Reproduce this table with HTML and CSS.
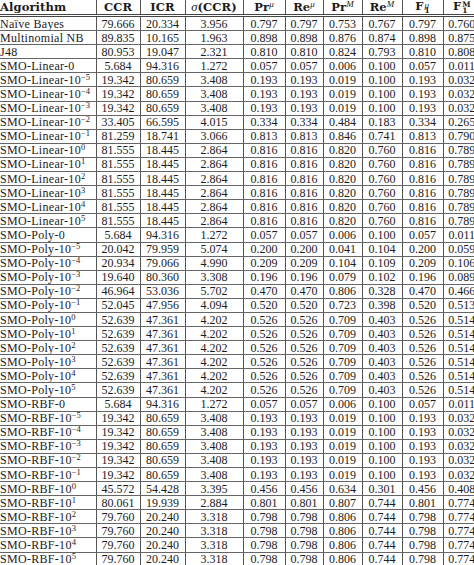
FILE: index.html
```html
<!DOCTYPE html>
<html>
<head>
<meta charset="utf-8">
<link rel="stylesheet" href="styles.css">
</head>
<body>
<table class="results">
<colgroup>
<col class="c-alg"><col class="c-ccr"><col class="c-icr"><col class="c-sd"><col class="c-m1"><col class="c-m2"><col class="c-m3"><col class="c-m4"><col class="c-m5"><col class="c-m6">
</colgroup>
<thead>
<tr>
<th class="alg">Algorithm</th>
<th>CCR</th>
<th>ICR</th>
<th><span class="mi">σ</span>(CCR)</th>
<th>Pr<sup class="mi">μ</sup></th>
<th>Re<sup class="mi">μ</sup></th>
<th>Pr<sup class="mi">M</sup></th>
<th>Re<sup class="mi">M</sup></th>
<th>F<span class="ss"><span class="up mi">μ</span><span class="dn">1</span></span></th>
<th>F<span class="ss"><span class="up">M</span><span class="dn">1</span></span></th>
</tr>
</thead>
<tbody>
<tr><td class="alg">Naïve Bayes</td><td>79.666</td><td>20.334</td><td>3.956</td><td>0.797</td><td>0.797</td><td>0.753</td><td>0.767</td><td>0.797</td><td>0.760</td></tr>
<tr><td class="alg">Multinomial NB</td><td>89.835</td><td>10.165</td><td>1.963</td><td>0.898</td><td>0.898</td><td>0.876</td><td>0.874</td><td>0.898</td><td>0.875</td></tr>
<tr><td class="alg">J48</td><td>80.953</td><td>19.047</td><td>2.321</td><td>0.810</td><td>0.810</td><td>0.824</td><td>0.793</td><td>0.810</td><td>0.808</td></tr>
<tr><td class="alg">SMO-Linear-0</td><td>5.684</td><td>94.316</td><td>1.272</td><td>0.057</td><td>0.057</td><td>0.006</td><td>0.100</td><td>0.057</td><td>0.011</td></tr>
<tr><td class="alg">SMO-Linear-10<sup>−5</sup></td><td>19.342</td><td>80.659</td><td>3.408</td><td>0.193</td><td>0.193</td><td>0.019</td><td>0.100</td><td>0.193</td><td>0.032</td></tr>
<tr><td class="alg">SMO-Linear-10<sup>−4</sup></td><td>19.342</td><td>80.659</td><td>3.408</td><td>0.193</td><td>0.193</td><td>0.019</td><td>0.100</td><td>0.193</td><td>0.032</td></tr>
<tr><td class="alg">SMO-Linear-10<sup>−3</sup></td><td>19.342</td><td>80.659</td><td>3.408</td><td>0.193</td><td>0.193</td><td>0.019</td><td>0.100</td><td>0.193</td><td>0.032</td></tr>
<tr><td class="alg">SMO-Linear-10<sup>−2</sup></td><td>33.405</td><td>66.595</td><td>4.015</td><td>0.334</td><td>0.334</td><td>0.484</td><td>0.183</td><td>0.334</td><td>0.265</td></tr>
<tr><td class="alg">SMO-Linear-10<sup>−1</sup></td><td>81.259</td><td>18.741</td><td>3.066</td><td>0.813</td><td>0.813</td><td>0.846</td><td>0.741</td><td>0.813</td><td>0.790</td></tr>
<tr><td class="alg">SMO-Linear-10<sup>0</sup></td><td>81.555</td><td>18.445</td><td>2.864</td><td>0.816</td><td>0.816</td><td>0.820</td><td>0.760</td><td>0.816</td><td>0.789</td></tr>
<tr><td class="alg">SMO-Linear-10<sup>1</sup></td><td>81.555</td><td>18.445</td><td>2.864</td><td>0.816</td><td>0.816</td><td>0.820</td><td>0.760</td><td>0.816</td><td>0.789</td></tr>
<tr><td class="alg">SMO-Linear-10<sup>2</sup></td><td>81.555</td><td>18.445</td><td>2.864</td><td>0.816</td><td>0.816</td><td>0.820</td><td>0.760</td><td>0.816</td><td>0.789</td></tr>
<tr><td class="alg">SMO-Linear-10<sup>3</sup></td><td>81.555</td><td>18.445</td><td>2.864</td><td>0.816</td><td>0.816</td><td>0.820</td><td>0.760</td><td>0.816</td><td>0.789</td></tr>
<tr><td class="alg">SMO-Linear-10<sup>4</sup></td><td>81.555</td><td>18.445</td><td>2.864</td><td>0.816</td><td>0.816</td><td>0.820</td><td>0.760</td><td>0.816</td><td>0.789</td></tr>
<tr><td class="alg">SMO-Linear-10<sup>5</sup></td><td>81.555</td><td>18.445</td><td>2.864</td><td>0.816</td><td>0.816</td><td>0.820</td><td>0.760</td><td>0.816</td><td>0.789</td></tr>
<tr><td class="alg">SMO-Poly-0</td><td>5.684</td><td>94.316</td><td>1.272</td><td>0.057</td><td>0.057</td><td>0.006</td><td>0.100</td><td>0.057</td><td>0.011</td></tr>
<tr><td class="alg">SMO-Poly-10<sup>−5</sup></td><td>20.042</td><td>79.959</td><td>5.074</td><td>0.200</td><td>0.200</td><td>0.041</td><td>0.104</td><td>0.200</td><td>0.059</td></tr>
<tr><td class="alg">SMO-Poly-10<sup>−4</sup></td><td>20.934</td><td>79.066</td><td>4.990</td><td>0.209</td><td>0.209</td><td>0.104</td><td>0.109</td><td>0.209</td><td>0.106</td></tr>
<tr><td class="alg">SMO-Poly-10<sup>−3</sup></td><td>19.640</td><td>80.360</td><td>3.308</td><td>0.196</td><td>0.196</td><td>0.079</td><td>0.102</td><td>0.196</td><td>0.089</td></tr>
<tr><td class="alg">SMO-Poly-10<sup>−2</sup></td><td>46.964</td><td>53.036</td><td>5.702</td><td>0.470</td><td>0.470</td><td>0.806</td><td>0.328</td><td>0.470</td><td>0.466</td></tr>
<tr><td class="alg">SMO-Poly-10<sup>−1</sup></td><td>52.045</td><td>47.956</td><td>4.094</td><td>0.520</td><td>0.520</td><td>0.723</td><td>0.398</td><td>0.520</td><td>0.513</td></tr>
<tr><td class="alg">SMO-Poly-10<sup>0</sup></td><td>52.639</td><td>47.361</td><td>4.202</td><td>0.526</td><td>0.526</td><td>0.709</td><td>0.403</td><td>0.526</td><td>0.514</td></tr>
<tr><td class="alg">SMO-Poly-10<sup>1</sup></td><td>52.639</td><td>47.361</td><td>4.202</td><td>0.526</td><td>0.526</td><td>0.709</td><td>0.403</td><td>0.526</td><td>0.514</td></tr>
<tr><td class="alg">SMO-Poly-10<sup>2</sup></td><td>52.639</td><td>47.361</td><td>4.202</td><td>0.526</td><td>0.526</td><td>0.709</td><td>0.403</td><td>0.526</td><td>0.514</td></tr>
<tr><td class="alg">SMO-Poly-10<sup>3</sup></td><td>52.639</td><td>47.361</td><td>4.202</td><td>0.526</td><td>0.526</td><td>0.709</td><td>0.403</td><td>0.526</td><td>0.514</td></tr>
<tr><td class="alg">SMO-Poly-10<sup>4</sup></td><td>52.639</td><td>47.361</td><td>4.202</td><td>0.526</td><td>0.526</td><td>0.709</td><td>0.403</td><td>0.526</td><td>0.514</td></tr>
<tr><td class="alg">SMO-Poly-10<sup>5</sup></td><td>52.639</td><td>47.361</td><td>4.202</td><td>0.526</td><td>0.526</td><td>0.709</td><td>0.403</td><td>0.526</td><td>0.514</td></tr>
<tr><td class="alg">SMO-RBF-0</td><td>5.684</td><td>94.316</td><td>1.272</td><td>0.057</td><td>0.057</td><td>0.006</td><td>0.100</td><td>0.057</td><td>0.011</td></tr>
<tr><td class="alg">SMO-RBF-10<sup>−5</sup></td><td>19.342</td><td>80.659</td><td>3.408</td><td>0.193</td><td>0.193</td><td>0.019</td><td>0.100</td><td>0.193</td><td>0.032</td></tr>
<tr><td class="alg">SMO-RBF-10<sup>−4</sup></td><td>19.342</td><td>80.659</td><td>3.408</td><td>0.193</td><td>0.193</td><td>0.019</td><td>0.100</td><td>0.193</td><td>0.032</td></tr>
<tr><td class="alg">SMO-RBF-10<sup>−3</sup></td><td>19.342</td><td>80.659</td><td>3.408</td><td>0.193</td><td>0.193</td><td>0.019</td><td>0.100</td><td>0.193</td><td>0.032</td></tr>
<tr><td class="alg">SMO-RBF-10<sup>−2</sup></td><td>19.342</td><td>80.659</td><td>3.408</td><td>0.193</td><td>0.193</td><td>0.019</td><td>0.100</td><td>0.193</td><td>0.032</td></tr>
<tr><td class="alg">SMO-RBF-10<sup>−1</sup></td><td>19.342</td><td>80.659</td><td>3.408</td><td>0.193</td><td>0.193</td><td>0.019</td><td>0.100</td><td>0.193</td><td>0.032</td></tr>
<tr><td class="alg">SMO-RBF-10<sup>0</sup></td><td>45.572</td><td>54.428</td><td>3.395</td><td>0.456</td><td>0.456</td><td>0.634</td><td>0.301</td><td>0.456</td><td>0.408</td></tr>
<tr><td class="alg">SMO-RBF-10<sup>1</sup></td><td>80.061</td><td>19.939</td><td>2.884</td><td>0.801</td><td>0.801</td><td>0.807</td><td>0.744</td><td>0.801</td><td>0.774</td></tr>
<tr><td class="alg">SMO-RBF-10<sup>2</sup></td><td>79.760</td><td>20.240</td><td>3.318</td><td>0.798</td><td>0.798</td><td>0.806</td><td>0.744</td><td>0.798</td><td>0.774</td></tr>
<tr><td class="alg">SMO-RBF-10<sup>3</sup></td><td>79.760</td><td>20.240</td><td>3.318</td><td>0.798</td><td>0.798</td><td>0.806</td><td>0.744</td><td>0.798</td><td>0.774</td></tr>
<tr><td class="alg">SMO-RBF-10<sup>4</sup></td><td>79.760</td><td>20.240</td><td>3.318</td><td>0.798</td><td>0.798</td><td>0.806</td><td>0.744</td><td>0.798</td><td>0.774</td></tr>
<tr><td class="alg">SMO-RBF-10<sup>5</sup></td><td>79.760</td><td>20.240</td><td>3.318</td><td>0.798</td><td>0.798</td><td>0.806</td><td>0.744</td><td>0.798</td><td>0.774</td></tr>
</tbody>
</table>
</body>
</html>
```

FILE: styles.css
```css
html, body {
  margin: 0;
  padding: 0;
  background: #ffffff;
  overflow: hidden;
}

.results {
  border-collapse: collapse;
  table-layout: fixed;
  width: 480px;
  font-family: "Liberation Serif", "Times New Roman", serif;
  font-size: 12px;
  color: #1c1c1c;
}

.c-alg { width: 96px; }
.c-ccr { width: 44px; }
.c-icr { width: 45px; }
.c-sd  { width: 58px; }
.c-m1  { width: 42px; }
.c-m2  { width: 38px; }
.c-m3  { width: 39px; }
.c-m4  { width: 40px; }
.c-m5  { width: 41px; }
.c-m6  { width: 37px; }

.results th,
.results td {
  padding: 0;
  text-align: center;
  vertical-align: middle;
  border-left: 1px solid #555;
  border-bottom: 1px solid #666;
  white-space: nowrap;
  line-height: 12px;
}

.results td {
  height: 13.1px;
  overflow: hidden;
}

.results th {
  height: 14px;
  font-family: "DejaVu Serif", serif;
  font-weight: bold;
  font-size: 11.5px;
  border-bottom: 3px double #444;
  letter-spacing: 0.1px;
}

.results .alg {
  text-align: left;
  border-left: none;
  padding-left: 0;
}

.results td.alg {
  font-size: 12px;
  letter-spacing: 0.3px;
}

.results sup {
  font-size: 8.5px;
  line-height: 0;
  letter-spacing: 0;
}

.results td sup {
  vertical-align: 4px;
}

.mi {
  font-family: "Liberation Serif", serif;
  font-style: italic;
  font-weight: normal;
}

th .mi {
  font-size: 12.5px;
}

th sup {
  vertical-align: 4px;
}

th sup.mi {
  font-size: 9px;
}

.ss {
  display: inline-block;
  vertical-align: -3px;
  line-height: 6px;
  margin-left: 1px;
  text-align: left;
}

.ss .up,
.ss .dn {
  display: block;
  font-family: "DejaVu Serif", serif;
  font-size: 7.5px;
  font-weight: bold;
}

.ss .up.mi {
  font-family: "Liberation Serif", serif;
  font-weight: normal;
  font-size: 9px;
}
```
